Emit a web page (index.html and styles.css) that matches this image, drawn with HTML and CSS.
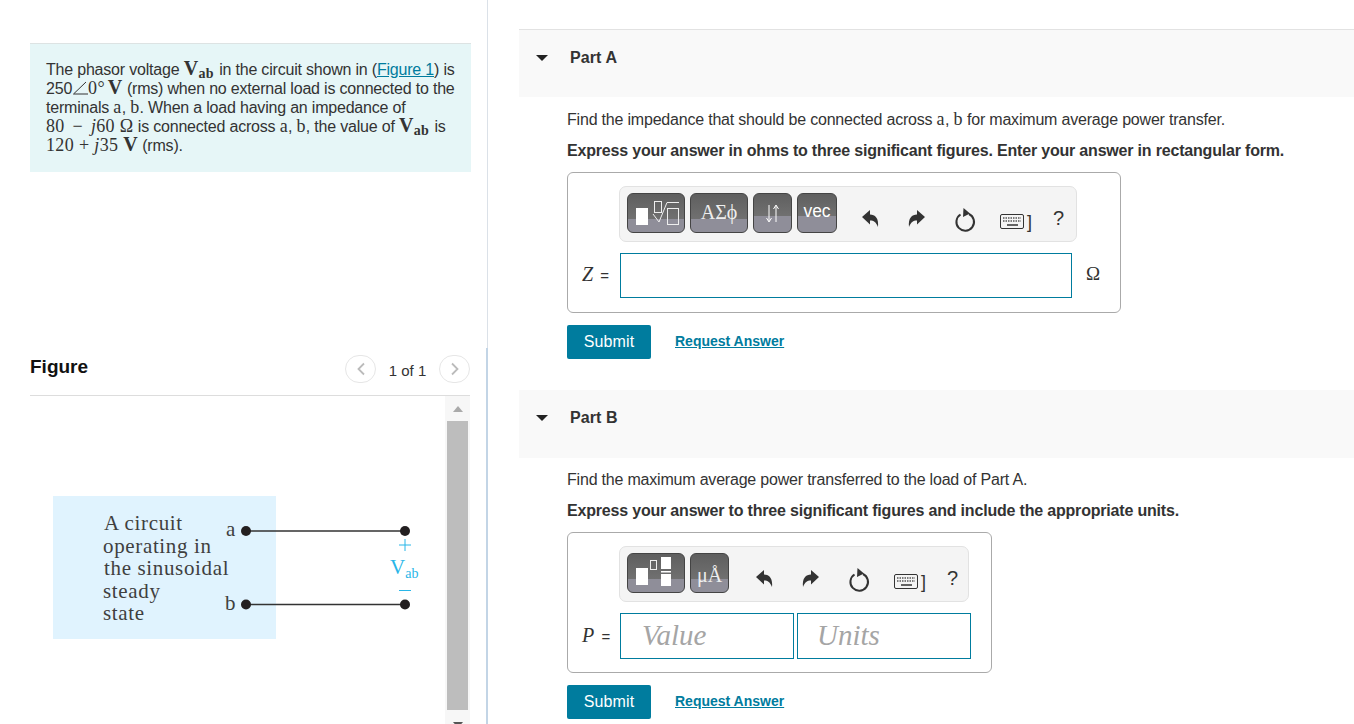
FILE: index.html
```html
<!DOCTYPE html>
<html lang="en">
<head>
<meta charset="utf-8">
<title>Part A</title>
<link rel="stylesheet" href="styles.css">
</head>
<body>
<aside class="left">
  <div class="prompt">
    <p>The phasor voltage <b class="m v">V<sub>ab</sub></b> in the circuit shown in (<a href="#">Figure 1</a>) is<br>
    <span class="n">250</span><svg class="angle" viewBox="0 0 16 14" width="16" height="14"><path d="M14 1 1.500 13H16" fill="none" stroke="#333" stroke-width="1"/></svg><span class="m tight">0° <b class="v">V</b></span> (rms) when no external load is connected to the<br>
    terminals <span class="m">a</span>, <span class="m">b</span>. When a load having an impedance of<br>
    <span class="m">80<span class="op"> − </span><i>j</i>60 Ω</span> is connected across <span class="m">a</span>, <span class="m">b</span>, the value of <b class="m v">V<sub>ab</sub></b> is<br>
    <span class="m">120 + <i>j</i>35 <b class="v">V</b></span> (rms).</p>
  </div>
  <div class="fig-head">
    <h2>Figure</h2>
    <div class="pager">
      <span class="pg"><svg viewBox="0 0 10 14" width="10" height="14"><path d="M8 1.500 2.500 7 8 12.500" fill="none" stroke="#bbb" stroke-width="1.800"/></svg></span>
      <span class="pg-text">1 of 1</span>
      <span class="pg"><svg viewBox="0 0 10 14" width="10" height="14"><path d="M2 1.500 7.500 7 2 12.500" fill="none" stroke="#bbb" stroke-width="1.800"/></svg></span>
    </div>
  </div>
  <div class="fig-body">
    <svg class="circuit" viewBox="0 0 415 328" width="415" height="328">
      <rect x="23" y="100" width="223" height="143" fill="#e0f3fe"/>
      <g class="cap">
        <text x="74" y="134">A circuit</text>
        <text x="73" y="157">operating in</text>
        <text x="74" y="179">the sinusoidal</text>
        <text x="73" y="202">steady</text>
        <text x="73" y="224">state</text>
        <text x="196" y="140">a</text>
        <text x="195" y="214">b</text>
      </g>
      <path d="M216 135H376M216 208.500H376" stroke="#333" stroke-width="1.300"/>
      <g fill="#231f20"><circle cx="216" cy="135" r="5"/><circle cx="375" cy="135" r="5"/><circle cx="216" cy="208.500" r="5"/><circle cx="375" cy="208.500" r="5"/></g>
      <path d="M375 143V155M369 149H381M369 194.500H381" stroke="#29b6e8" stroke-width="1"/>
      <text class="vab" x="360" y="178">V<tspan class="vab-sub" dy="4">ab</tspan></text>
    </svg>
    <div class="scroll">
      <span class="arrow-up"></span>
      <span class="thumb"></span>
      <span class="arrow-down"></span>
    </div>
  </div>
</aside>
<main class="right">
  <section class="part first">
    <header class="part-head"><span class="tri"></span><h3>Part A</h3></header>
    <div class="part-body">
      <p class="q">Find the impedance that should be connected across <span class="m">a</span>, <span class="m">b</span> for maximum average power transfer.</p>
      <p class="inst">Express your answer in ohms to three significant figures. Enter your answer in rectangular form.</p>
      <div class="answer wide">
        <div class="toolbar">
          <span class="tb w58"><svg viewBox="0 0 58 40" width="58" height="40"><rect x="9" y="15" width="12" height="17" fill="#fff"/><g fill="none" stroke="#eee" stroke-width="1"><rect x="27.500" y="8.500" width="7" height="11"/><path d="M26 21 32 29 40 9.500H52"/><rect x="40.500" y="15.500" width="11" height="16"/></g></svg></span>
          <span class="tb w58 greek">ΑΣϕ</span>
          <span class="tb w39 split"><svg viewBox="0 0 39 40" width="39" height="40"><path d="M16 12V28M13.500 25 16 29 18.500 25M23 29V13M20.500 16 23 12 25.500 16" fill="none" stroke="#fff" stroke-width="1"/></svg></span>
          <span class="tb w40 split vec">vec</span>
          <span class="tools t1">
            <svg class="undo" viewBox="0 0 18 18" width="18" height="18"><path class="ic" d="M1 8 9 1V5.500C14 5.500 18 9 17 18 15 13 13 11.500 9 11.500V15.500Z"/></svg>
            <svg class="redo" viewBox="0 0 18 18" width="18" height="18"><path class="ic" d="M17 8 9 1V5.500C4 5.500 0 9 1 18 3 13 5 11.500 9 11.500V15.500Z"/></svg>
            <svg class="reload" viewBox="0 0 22 24" width="22" height="24"><path d="M6.500 6.500A8.800 8.800 0 1 0 15 6" fill="none" stroke="#333" stroke-width="2"/><path class="ic" d="M9.500 0 16 5.500 9 9Z"/></svg>
            <span class="kb"><svg viewBox="0 0 24 16" width="24" height="16"><rect x=".5" y=".5" width="23" height="14" rx="1.500" fill="#f4f4f4" stroke="#333"/><path d="M3 4H21M3 7H21" stroke="#555" stroke-width="1.500" stroke-dasharray="1.500 1"/><path d="M7 11H18" stroke="#333" stroke-width="1.500"/></svg><i>]</i></span>
            <span class="help">?</span>
          </span>
        </div>
        <div class="row">
          <label class="lbl"><i class="m">Z</i> =</label>
          <span class="input big"></span>
          <span class="unit m">Ω</span>
        </div>
      </div>
      <div class="actions"><button class="submit">Submit</button><a class="req" href="#">Request Answer</a></div>
    </div>
  </section>
  <section class="part second">
    <header class="part-head"><span class="tri"></span><h3>Part B</h3></header>
    <div class="part-body">
      <p class="q">Find the maximum average power transferred to the load of Part A.</p>
      <p class="inst">Express your answer to three significant figures and include the appropriate units.</p>
      <div class="answer narrow">
        <div class="toolbar">
          <span class="tb w58"><svg viewBox="0 0 58 40" width="58" height="40"><rect x="9" y="15" width="12" height="17" fill="#fff"/><rect x="23.500" y="7.500" width="6" height="9" fill="none" stroke="#eee"/><rect x="34" y="4" width="10" height="12" fill="#fff"/><rect x="34" y="18" width="10" height="1.500" fill="#fff"/><rect x="34" y="21" width="10" height="12" fill="#fff"/></svg></span>
          <span class="tb w39 mu">μÅ</span>
          <span class="tools t2">
            <svg class="undo" viewBox="0 0 18 18" width="18" height="18"><path class="ic" d="M1 8 9 1V5.500C14 5.500 18 9 17 18 15 13 13 11.500 9 11.500V15.500Z"/></svg>
            <svg class="redo" viewBox="0 0 18 18" width="18" height="18"><path class="ic" d="M17 8 9 1V5.500C4 5.500 0 9 1 18 3 13 5 11.500 9 11.500V15.500Z"/></svg>
            <svg class="reload" viewBox="0 0 22 24" width="22" height="24"><path d="M6.500 6.500A8.800 8.800 0 1 0 15 6" fill="none" stroke="#333" stroke-width="2"/><path class="ic" d="M9.500 0 16 5.500 9 9Z"/></svg>
            <span class="kb"><svg viewBox="0 0 24 16" width="24" height="16"><rect x=".5" y=".5" width="23" height="14" rx="1.500" fill="#f4f4f4" stroke="#333"/><path d="M3 4H21M3 7H21" stroke="#555" stroke-width="1.500" stroke-dasharray="1.500 1"/><path d="M7 11H18" stroke="#333" stroke-width="1.500"/></svg><i>]</i></span>
            <span class="help">?</span>
          </span>
        </div>
        <div class="row tall">
          <label class="lbl"><i class="m">P</i> =</label>
          <span class="input ph">Value</span>
          <span class="input ph">Units</span>
        </div>
      </div>
      <div class="actions"><button class="submit">Submit</button><a class="req" href="#">Request Answer</a></div>
    </div>
  </section>
</main>
</body>
</html>
```
FILE: styles.css
```css
* { box-sizing: border-box; }
html, body { margin: 0; height: 724px; overflow: hidden; }
body { display: flex; background: #fff; color: #333; font-family: "Liberation Sans", Arial, sans-serif; font-size: 16px; }
p, h2, h3 { margin: 0; }
.m { font-family: "Liberation Serif", serif; }
.left { position: relative; width: 488px; flex: none; height: 724px; padding: 43px 16px 0 30px; border-right: 1px solid #dbe1e8; }
.left::after { content: ""; position: absolute; top: 348px; bottom: 0; right: -1px; width: 2px; background: #c3d5e6; }
.prompt { height: 129px; padding: 16px 0 0 16px; background: #e6f6f7; border-top: 1px solid #dde3e3; line-height: 19px; letter-spacing: -.2px; }
.prompt p { white-space: nowrap; }
.prompt a, .req { color: #007c9e; }
.prompt .m { font-size: 18px; line-height: 0; letter-spacing: .35px; }
.prompt .v { font-size: 20px; line-height: 0; }
.prompt sub { margin-right: 1px; font-size: 14px; line-height: 0; vertical-align: -3px; }
.prompt .tight { word-spacing: -2px; }
.prompt .op { margin: 0 3px; }
.angle { vertical-align: -1px; }
.fig-head { display: flex; justify-content: space-between; height: 224px; padding-top: 184px; margin-right: 1px; border-bottom: 1px solid #ddd; }
h2 { font-size: 19px; line-height: 22px; color: #111; }
.pager { display: flex; align-items: center; height: 28px; margin-top: -1px; font-size: 15px; }
.pg { display: flex; width: 31px; height: 28px; align-items: center; justify-content: center; border: 1px solid #e6e6e6; border-radius: 14px; }
.pg-text { width: 63px; text-align: center; padding-top: 3px; }
.fig-body { display: flex; width: 440px; height: 328px; }
.circuit { flex: none; }
.cap { font-family: "Liberation Serif", serif; font-size: 21px; letter-spacing: .65px; fill: #3f3f3f; }
.vab { font-family: "Liberation Serif", serif; font-size: 21px; fill: #29b6e8; }
.vab-sub { font-size: 14px; }
.scroll { display: flex; flex: none; flex-direction: column; width: 25px; align-items: center; background: #f7f7f7; }
.thumb { flex: none; width: 21px; height: 289px; background: #bdbdbd; }
.arrow-up { flex: none; width: 0; height: 0; margin: 10px 0 9px; border: 5.500px solid transparent; border-top: 0; border-bottom: 6px solid #aaa; }
.arrow-down { flex: none; width: 0; height: 0; margin-top: 12px; border: 5.500px solid transparent; border-bottom: 0; border-top: 6px solid #555; }
.right { flex: 1; padding: 29px 0 0 31px; min-width: 0; }
.second { margin-top: 31px; }
.part-head { display: flex; height: 68px; padding: 18px 0 0 17px; background: #f9f9f9; }
.first .part-head { border-top: 1px solid #e2e2e2; }
.tri { width: 0; height: 0; margin: 7px 21px 0 0; border: 6.500px solid transparent; border-top: 6px solid #222; border-bottom: 0; }
h3 { margin-left: 1px; font-size: 16px; line-height: 20px; letter-spacing: .1px; color: #333; }
.part-body { padding: 12px 0 0 48px; }
.first .part-body { padding-top: 13px; }
.q { line-height: 20px; letter-spacing: -.2px; }
.q .m { font-size: 18px; line-height: 0; letter-spacing: .3px; }
.inst { margin-top: 11px; line-height: 20px; font-weight: 700; letter-spacing: -.19px; }
.answer { margin-top: 11px; padding: 13px 0 0; border: 1px solid #aaa; border-radius: 6px; }
.wide { width: 554px; height: 141px; }
.narrow { width: 425px; height: 141px; }
.toolbar { display: flex; gap: 5px; align-items: flex-start; height: 56px; padding: 6px 0 0 7px; margin-left: 51px; background: #f4f4f4; border: 1px solid #e2e2e2; border-radius: 7px; }
.wide .toolbar { width: 458px; }
.narrow .toolbar { width: 350px; }
.tb { display: block; height: 40px; border: 1px solid #444; border-radius: 6px; color: #fff; text-align: center; background: linear-gradient(#5f5f5f 0, #707070 65%, #8f8e99 65%, #8f8e99 100%); overflow: hidden; }
.tb svg { display: block; margin: -1px; }
.w58 { width: 58px; }
.w39 { width: 39px; }
.w40 { width: 40px; }
.split { background: linear-gradient(#5f5f5f 0, #707070 57%, #8f8e99 57%, #8f8e99 100%); }
.greek { font: 20px/37px "Liberation Serif", serif; color: #eee; }
.vec { font-size: 17.500px; line-height: 35px; }
.mu { font: 20px/43px "Liberation Serif", serif; color: #eee; }
.tools { display: flex; align-items: center; height: 46px; flex: none; margin-top: 2px; }
.t1 { margin-left: 19px; }
.t2 { margin-left: 21px; }
.tools svg { flex: none; }
.ic { fill: #333; }
.undo { margin-right: 29px; }
.redo { margin-right: 28px; }
.reload { margin-top: 4px; margin-right: 24px; }
.kb { display: flex; align-items: center; width: 32px; margin-top: 7px; }
.kb i { font-style: normal; font-size: 18px; line-height: 16px; margin-left: 3px; }
.help { margin-left: 21px; margin-top: 1px; font-size: 20px; }
.row { display: flex; align-items: center; height: 45px; margin-top: 11px; }
.tall { height: 46px; gap: 3px; }
.lbl { width: 52px; margin-top: -2px; padding-left: 14px; font-size: 15px; white-space: nowrap; word-spacing: 3px; }
.lbl .m { font-size: 20px; }
.tall .lbl { margin-right: -3px; }
.input { display: block; height: 100%; border: 1px solid #007c9e; background: #fff; }
.big { width: 452px; }
.unit { margin: -3px 0 0 14px; font-size: 19px; }
.ph { width: 174px; padding-left: 21px; font: italic 29px/42px "Liberation Serif", serif; color: #a5a5a5; }
.ph + .ph { padding-left: 19px; }
.actions { display: flex; align-items: center; margin-top: 12px; height: 34px; }
.submit { width: 84px; height: 34px; padding: 0; border: 0; border-radius: 2px; background: #007c9e; color: #fff; font: 16px "Liberation Sans", sans-serif; letter-spacing: .1px; }
.req { margin-left: 24px; margin-bottom: 2px; font-size: 14px; font-weight: 700; }
```
